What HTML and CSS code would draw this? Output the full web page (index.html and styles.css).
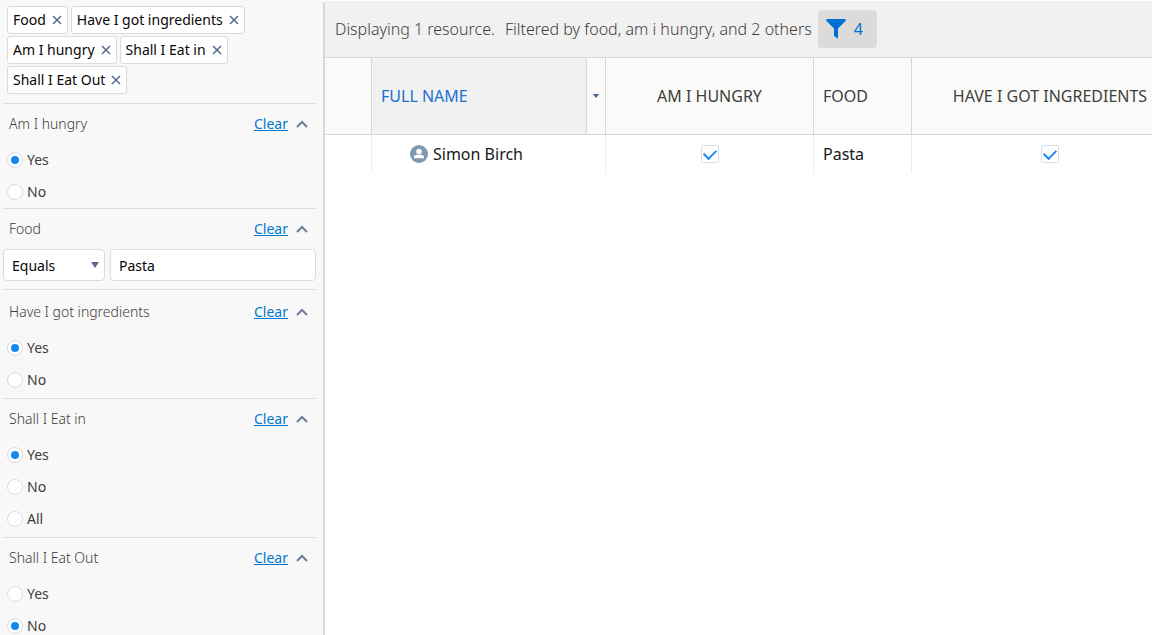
FILE: index.html
```html
<!DOCTYPE html>
<html lang="en">
  <head>
    <meta charset="UTF-8" />
    <meta name="viewport" content="width=device-width, initial-scale=1.0" />
    <title>Resources</title>
    <link rel="stylesheet" href="styles.css">
  </head>
  <body>
    <svg class="sprite" aria-hidden="true">
      <symbol id="icon-x" viewBox="0 0 10 10">
        <path d="M1 1L9 9M9 1L1 9" fill="none" stroke="#54698d" stroke-width="1.5" />
      </symbol>
      <symbol id="icon-up" viewBox="0 0 12 8">
        <path d="M1 7L6 2L11 7" fill="none" stroke="#6b7f9c" stroke-width="2" />
      </symbol>
    </svg>

    <div class="page">
      <aside class="sidebar">
        <div class="tags">
          <span class="tag">Food <button class="icon-btn" aria-label="Remove Food"><svg class="icon-x"><use href="#icon-x" /></svg></button></span>
          <span class="tag">Have I got ingredients <button class="icon-btn" aria-label="Remove Have I got ingredients"><svg class="icon-x"><use href="#icon-x" /></svg></button></span>
          <span class="tag">Am I hungry <button class="icon-btn" aria-label="Remove Am I hungry"><svg class="icon-x"><use href="#icon-x" /></svg></button></span>
          <span class="tag">Shall I Eat in <button class="icon-btn" aria-label="Remove Shall I Eat in"><svg class="icon-x"><use href="#icon-x" /></svg></button></span>
          <span class="tag">Shall I Eat Out <button class="icon-btn" aria-label="Remove Shall I Eat Out"><svg class="icon-x"><use href="#icon-x" /></svg></button></span>
        </div>

        <section class="filter filter-first">
          <div class="filter-head">
            <h2>Am I hungry</h2>
            <a href="#">Clear</a>
            <button class="icon-btn" aria-label="Collapse Am I hungry"><svg class="icon-up"><use href="#icon-up" /></svg></button>
          </div>
          <label class="option"><input type="radio" name="hungry" checked />Yes</label>
          <label class="option"><input type="radio" name="hungry" />No</label>
        </section>

        <section class="filter filter-text">
          <div class="filter-head">
            <h2>Food</h2>
            <a href="#">Clear</a>
            <button class="icon-btn" aria-label="Collapse Food"><svg class="icon-up"><use href="#icon-up" /></svg></button>
          </div>
          <div class="fields">
            <div class="select">
              <select aria-label="Food operator">
                <option>Equals</option>
              </select>
            </div>
            <input class="value" type="text" value="Pasta" aria-label="Food value" />
          </div>
        </section>

        <section class="filter">
          <div class="filter-head">
            <h2>Have I got ingredients</h2>
            <a href="#">Clear</a>
            <button class="icon-btn" aria-label="Collapse Have I got ingredients"><svg class="icon-up"><use href="#icon-up" /></svg></button>
          </div>
          <label class="option"><input type="radio" name="ingredients" checked />Yes</label>
          <label class="option"><input type="radio" name="ingredients" />No</label>
        </section>

        <section class="filter">
          <div class="filter-head">
            <h2>Shall I Eat in</h2>
            <a href="#">Clear</a>
            <button class="icon-btn" aria-label="Collapse Shall I Eat in"><svg class="icon-up"><use href="#icon-up" /></svg></button>
          </div>
          <label class="option"><input type="radio" name="eatin" checked />Yes</label>
          <label class="option"><input type="radio" name="eatin" />No</label>
          <label class="option"><input type="radio" name="eatin" />All</label>
        </section>

        <section class="filter">
          <div class="filter-head">
            <h2>Shall I Eat Out</h2>
            <a href="#">Clear</a>
            <button class="icon-btn" aria-label="Collapse Shall I Eat Out"><svg class="icon-up"><use href="#icon-up" /></svg></button>
          </div>
          <label class="option"><input type="radio" name="eatout" />Yes</label>
          <label class="option"><input type="radio" name="eatout" checked />No</label>
        </section>
      </aside>

      <main class="main">
        <div class="toolbar">
          <span>Displaying 1 resource.</span>
          <span class="summary">Filtered by food, am i hungry, and 2 others</span>
          <button class="filter-btn">
            <svg class="funnel" viewBox="0 0 20 20" aria-hidden="true">
              <path d="M1 0H19Q20.500 0.500 19.500 2L12 9.500V18.500Q12 20 10.700 19L8.700 17.400Q8 16.800 8 16V9.500L0.500 2Q-0.500 0.500 1 0Z" fill="#0070d2" />
            </svg>
            4
          </button>
        </div>

        <table class="grid">
          <colgroup>
            <col class="col-blank">
            <col class="col-name">
            <col class="col-hungry">
            <col class="col-food">
            <col>
          </colgroup>
          <thead>
            <tr>
              <th></th>
              <th class="name-head">
                <div class="name-box">
                  <span class="name-label">FULL NAME</span>
                  <button class="menu-btn" aria-label="Full name menu"></button>
                </div>
              </th>
              <th class="center">AM I HUNGRY</th>
              <th>FOOD</th>
              <th class="center wide">HAVE I GOT INGREDIENTS</th>
            </tr>
          </thead>
          <tbody>
            <tr>
              <td></td>
              <td>
                <div class="person">
                  <svg class="avatar" viewBox="0 0 18 18" aria-hidden="true">
                    <circle cx="9" cy="9" r="9" fill="#7f98b0" />
                    <circle cx="9" cy="6.500" r="2.700" fill="#fff" />
                    <path d="M4 13.200V12Q4 10.400 7.500 9.500Q9 10.300 10.500 9.500Q14 10.400 14 12V13.200Z" fill="#fff" />
                  </svg>
                  Simon Birch
                </div>
              </td>
              <td><input type="checkbox" aria-label="Am I hungry" checked /></td>
              <td>Pasta</td>
              <td class="wide"><input type="checkbox" aria-label="Have I got ingredients" checked /></td>
            </tr>
          </tbody>
        </table>
      </main>
    </div>
  </body>
</html>
```
FILE: styles.css
```css
* {
  box-sizing: border-box;
}

body {
  margin: 0;
  background: #fff;
  color: #3e3e3c;
  font-family: "Noto Sans", "Liberation Sans", sans-serif;
  font-size: 14px;
  line-height: 18px;
}

button,
input,
select {
  margin: 0;
  font-family: inherit;
  font-size: inherit;
}

.sprite {
  display: none;
}

.page {
  display: flex;
  height: 100vh;
  overflow: hidden;
}

/* sidebar */
.sidebar {
  flex: none;
  width: 323px;
  padding: 6px 7px 0 3px;
  background: #f8f8f8;
  overflow: hidden;
}

.tags {
  display: flex;
  flex-wrap: wrap;
  gap: 2px 3px;
  padding: 0 60px 9px 4px;
}

.tag {
  display: flex;
  align-items: center;
  gap: 6px;
  height: 28px;
  padding: 0 5px;
  border: 1px solid #dddbda;
  border-radius: 3px;
  background: #fff;
  color: #080707;
  white-space: nowrap;
}

.icon-btn {
  display: flex;
  padding: 0;
  border: 0;
  background: none;
  cursor: pointer;
}

.icon-x {
  width: 10px;
  height: 10px;
}

.icon-up {
  width: 12px;
  height: 8px;
}

.filter {
  padding-bottom: 2px;
  border-top: 1px solid #dddbda;
}

.filter-first {
  padding-bottom: 0;
}

.filter-text {
  padding-bottom: 8px;
}

.filter-text + .filter {
  padding-top: 2px;
}

.filter-head {
  display: flex;
  align-items: center;
  gap: 8px;
  height: 40px;
  padding: 0 8px 0 6px;
}

.filter-head h2 {
  flex: 1;
  margin: 0;
  font-size: 14px;
  font-weight: 300;
}

.filter-head a {
  color: #0078cf;
}

.option {
  display: flex;
  align-items: center;
  gap: 4px;
  height: 32px;
  padding-left: 4px;
}

.option input {
  display: grid;
  place-items: center;
  width: 16px;
  height: 16px;
  border: 1px solid #d8dde6;
  border-radius: 50%;
  background: #fff;
  appearance: none;
}

.option input:checked::before {
  content: "";
  width: 8px;
  height: 8px;
  border-radius: 50%;
  background: #1589ee;
}

.fields {
  display: flex;
  gap: 5px;
}

.select {
  position: relative;
  width: 102px;
}

.select::after {
  content: "";
  position: absolute;
  top: 13px;
  right: 6px;
  border: 4px solid transparent;
  border-top: 6px solid #54698d;
  border-bottom: 0;
  pointer-events: none;
}

.select select,
.value {
  width: 100%;
  height: 32px;
  padding: 0 8px;
  border: 1px solid #dddbda;
  border-radius: 4px;
  background: #fff;
  color: #080707;
  appearance: none;
}

.value {
  flex: 1;
  min-width: 0;
}

/* results */
.main {
  flex: 1;
  min-width: 0;
  margin-top: 1px;
  border-left: 2px solid #d8d8d8;
  border-top-left-radius: 4px;
  overflow: hidden;
}

.toolbar {
  display: flex;
  align-items: center;
  height: 57px;
  padding: 0 10px;
  border-bottom: 1px solid #d8d8d8;
  background: #f1f1f1;
  font-size: 16px;
  font-weight: 300;
  line-height: 20px;
  white-space: nowrap;
}

.summary {
  margin: 0 6px 0 10px;
}

.filter-btn {
  display: flex;
  align-items: center;
  gap: 8px;
  height: 38px;
  padding: 0 14px 0 8px;
  border: 0;
  border-radius: 4px;
  background: #dddbda;
  color: #0070d2;
}

.funnel {
  width: 20px;
  height: 20px;
}

.grid {
  width: 100%;
  border-collapse: separate;
  border-spacing: 0;
  table-layout: fixed;
  font-size: 16px;
}

.col-blank {
  width: 47px;
}

.col-name {
  width: 234px;
}

.col-hungry {
  width: 208px;
}

.col-food {
  width: 98px;
}

th,
td {
  padding: 0 9px;
  text-align: left;
  white-space: nowrap;
}

th {
  height: 77px;
  border-right: 1px solid #d8d8d8;
  border-bottom: 1px solid #d8d8d8;
  background: #fafaf9;
  font-weight: 400;
}

td {
  height: 38px;
  border-right: 1px solid #eee;
  color: #181818;
}

th:last-child,
td:last-child {
  border-right: 0;
}

.center {
  text-align: center;
}

/* last column runs on past the right edge of the window */
.wide {
  padding: 0 0 0 36px;
}

.name-head {
  padding: 0;
}

.name-box {
  display: flex;
  height: 76px;
}

.name-label {
  display: flex;
  flex: 1;
  align-items: center;
  padding-left: 9px;
  border-right: 1px solid #d8d8d8;
  background: #f1f1f1;
  color: #1b6fd0;
}

.menu-btn {
  display: grid;
  place-items: center;
  width: 18px;
  padding: 0;
  border: 0;
  background: none;
}

.menu-btn::before {
  content: "";
  border: 3px solid transparent;
  border-top: 4px solid #44608c;
  border-bottom: 0;
}

.person {
  display: flex;
  align-items: center;
  gap: 5px;
  padding-left: 29px;
}

.avatar {
  width: 18px;
  height: 18px;
}

td input {
  display: grid;
  place-items: center;
  width: 18px;
  height: 18px;
  margin: 0 auto;
  border: 1px solid #d8dde6;
  border-radius: 2px;
  background: #fff;
  appearance: none;
}

td input:checked::before {
  content: "";
  width: 10px;
  height: 6px;
  border-left: 2px solid #1589ee;
  border-bottom: 2px solid #1589ee;
  transform: translateY(-1px) rotate(-45deg);
}
```
